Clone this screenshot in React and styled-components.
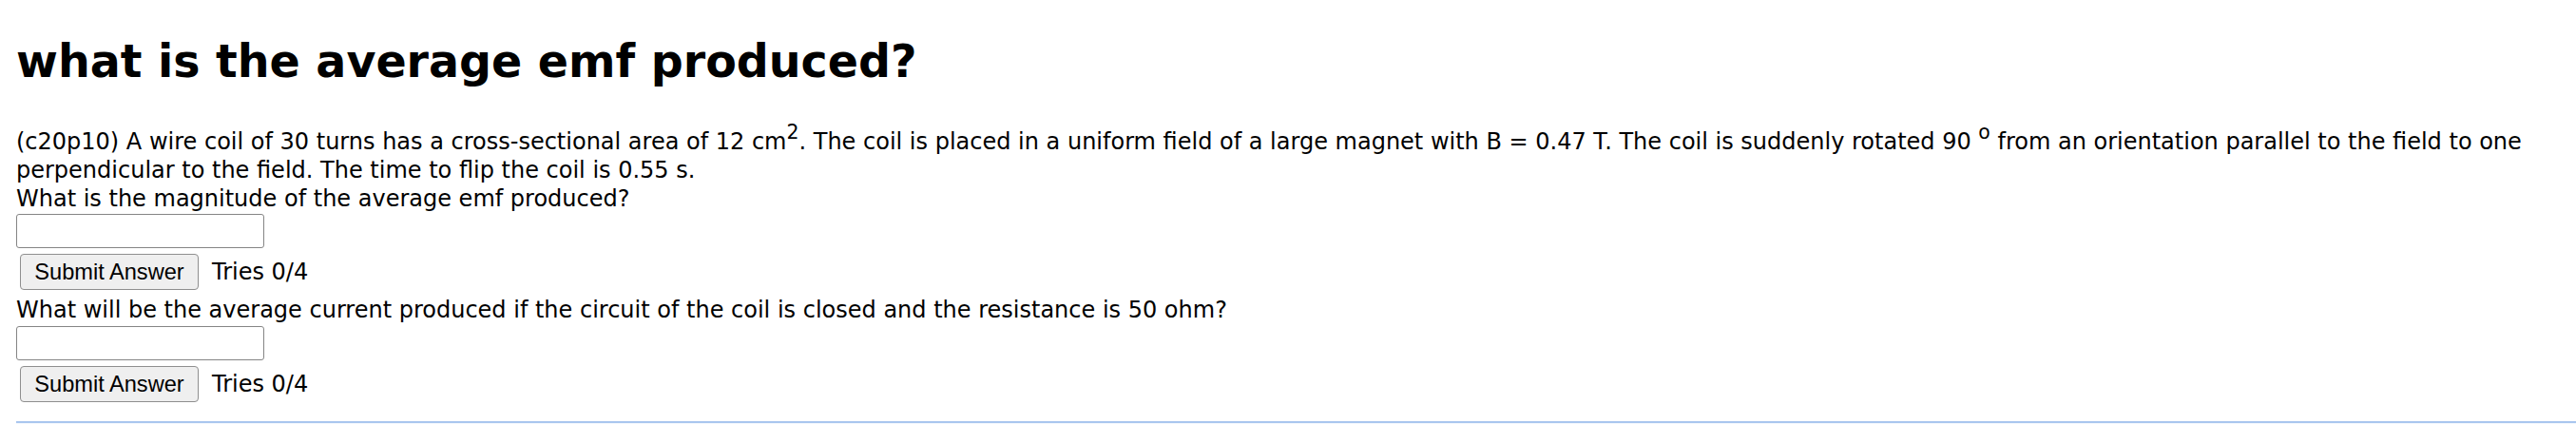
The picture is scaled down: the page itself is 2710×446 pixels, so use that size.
import React from "react";
import styled, { createGlobalStyle } from "styled-components";

const Global = createGlobalStyle`
  html, body { margin: 0; padding: 0; background: #ffffff; }
  body { font-family: "DejaVu Sans", Verdana, sans-serif; color: #000; }
`;

const Page = styled.div`
  padding: 37px 0 0 17px;
  width: 2710px;
  box-sizing: border-box;
  height: 446px;
  overflow: hidden;
`;

const Title = styled.h1`
  margin: 0;
  font-family: "DejaVu Sans", Verdana, sans-serif;
  font-weight: bold;
  font-size: 47.5px;
  line-height: 56px;
`;

const Body = styled.div`
  margin-top: 41px;
  font-size: 24px;
  line-height: 30px;
  padding-right: 30px;
`;

const Line = styled.div`
  line-height: 30px;
`;

const Sup = styled.sup`
  font-size: 0.85em;
  line-height: 0;
  vertical-align: 0.55em;
`;

const AnswerInput = styled.input`
  display: block;
  box-sizing: border-box;
  width: 261px;
  height: 36px;
  margin: ${(p) => (p.$first ? "1px" : "2px")} 0 0 0;
  border: 1.5px solid #858585;
  border-radius: 3px;
  background: #fff;
  font-size: 20px;
`;

const ActionRow = styled.div`
  display: flex;
  align-items: center;
  padding: 6px 0 6px 4px;
`;

const SubmitButton = styled.button`
  box-sizing: border-box;
  height: 38px;
  width: 188px;
  padding: 0;
  background: #efefef;
  border: 1.5px solid #8f8f8f;
  border-radius: 4px;
  font-family: "Liberation Sans", Arial, sans-serif;
  font-size: 23.6px;
  color: #000;
`;

const Tries = styled.span`
  margin-left: 14px;
  font-size: 24px;
`;

const Divider = styled.div`
  margin-top: 14px;
  height: 40px;
  border-top: 2px solid #a9c6ee;
  background: #f4f8fe;
`;

export default function App() {
  return (
    <>
      <Global />
      <Page>
        <Title>what is the average emf produced?</Title>
        <Body>
          <Line>
            (c20p10) A wire coil of 30 turns has a cross-sectional area of 12 cm<Sup>2</Sup>. The coil is placed in a uniform field of a large magnet with B = 0.47 T. The coil is suddenly rotated 90 <Sup>o</Sup> from an orientation parallel to the field to one perpendicular to the field. The time to flip the coil is 0.55 s.
          </Line>
          <Line>What is the magnitude of the average emf produced?</Line>
          <AnswerInput $first type="text" />
          <ActionRow>
            <SubmitButton>Submit Answer</SubmitButton>
            <Tries>Tries 0/4</Tries>
          </ActionRow>
          <Line>What will be the average current produced if the circuit of the coil is closed and the resistance is 50 ohm?</Line>
          <AnswerInput type="text" />
          <ActionRow>
            <SubmitButton>Submit Answer</SubmitButton>
            <Tries>Tries 0/4</Tries>
          </ActionRow>
        </Body>
        <Divider />
      </Page>
    </>
  );
}
